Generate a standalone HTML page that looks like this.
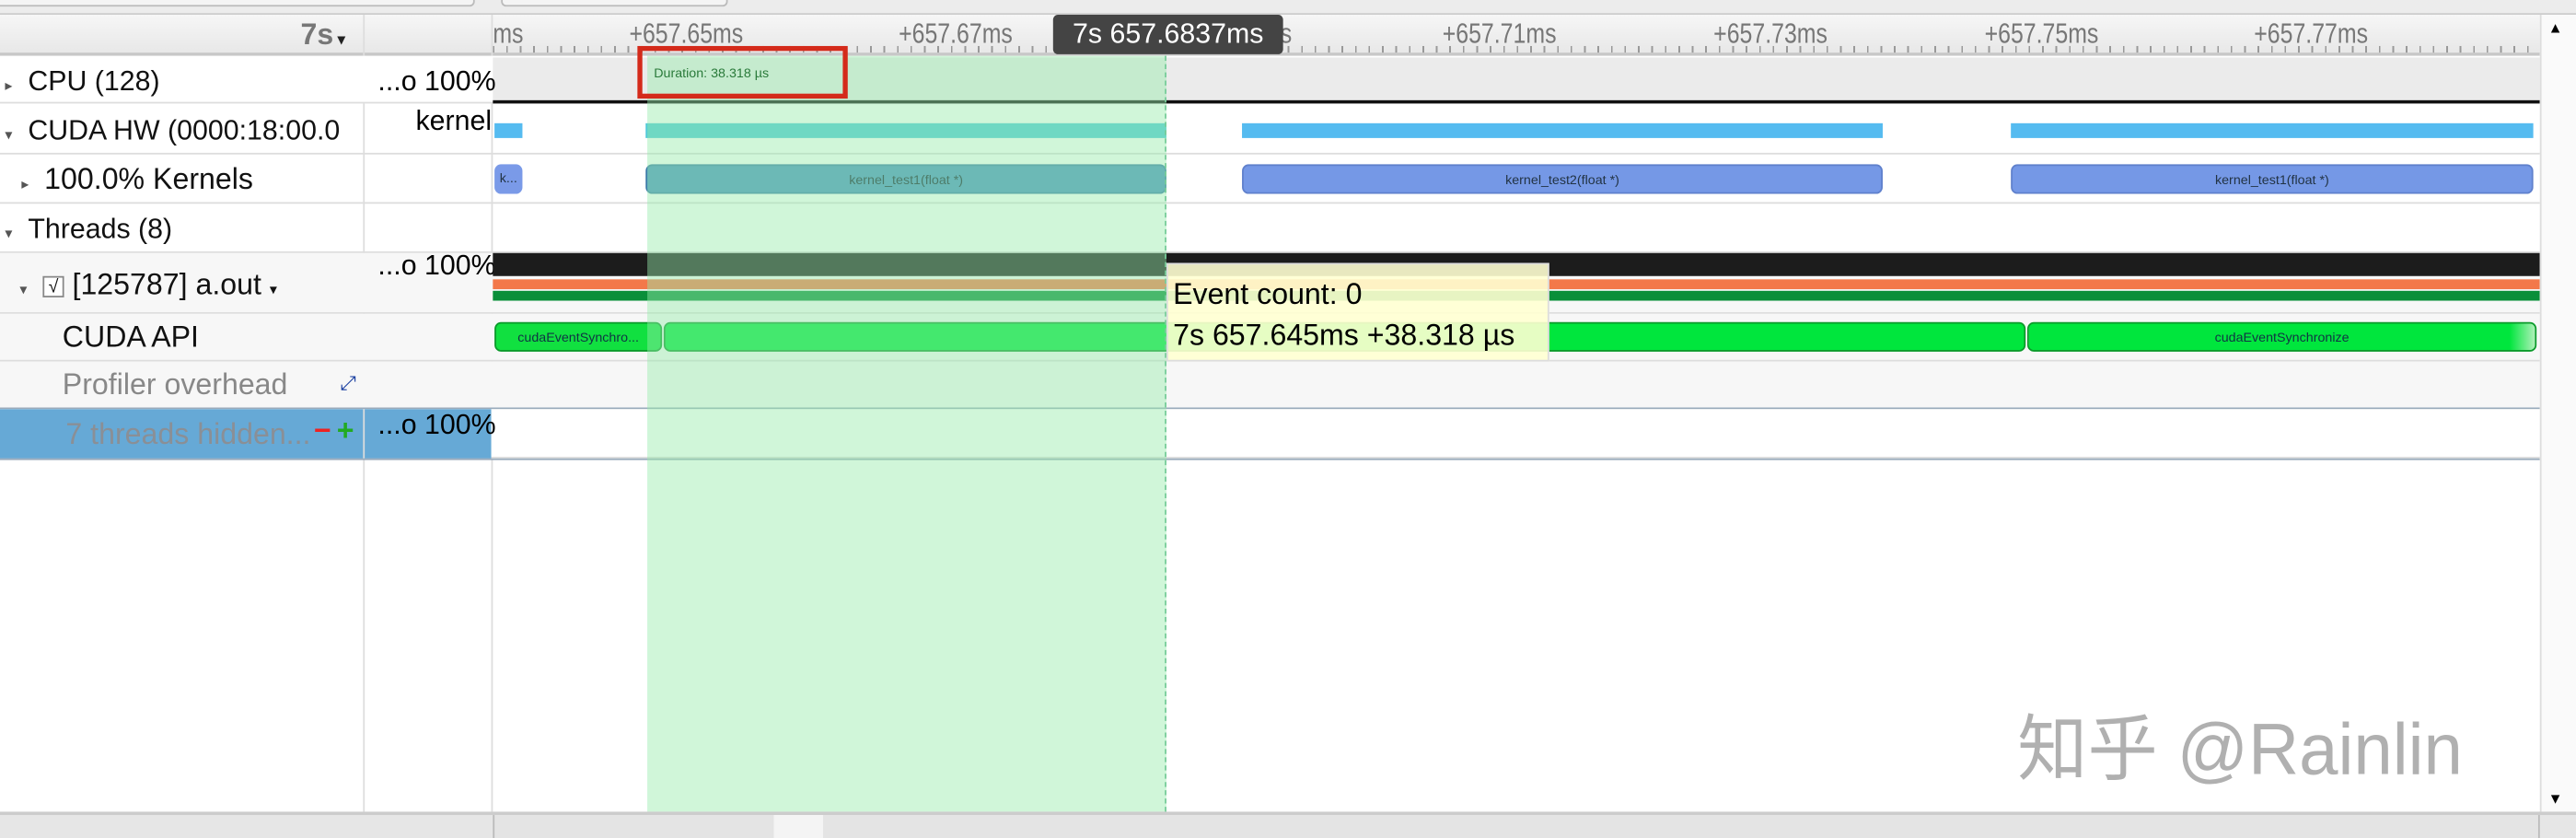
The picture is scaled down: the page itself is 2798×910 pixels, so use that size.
<!DOCTYPE html>
<html><head><meta charset="utf-8"><style>
*{margin:0;padding:0;box-sizing:border-box}
html,body{width:2798px;height:910px;overflow:hidden;background:#fff}
#w{position:absolute;left:0;top:0;width:1568px;height:510px;transform:scale(1.78444,1.78431);transform-origin:0 0;font-family:"Liberation Sans",sans-serif;background:#fff}
.a{position:absolute}
.lbl{position:absolute;left:0;width:221px;font-size:17px;color:#111;white-space:nowrap;overflow:hidden}
.tri{font-size:9px;color:#555;display:inline-block;width:14px}
.row{position:absolute;left:0;width:1546px;border-bottom:1px solid #ddd}
.tk{position:absolute;top:11px;font-size:17px;color:#777;transform:scaleX(0.82);transform-origin:0 0}
.bar{position:absolute;border-radius:4px;font-size:8px;text-align:center;color:#234;overflow:hidden;white-space:nowrap}
</style></head><body><div id="w">
<div class="a" style="left:0;top:0;width:1568px;height:9px;background:#ececec;border-bottom:1px solid #ccc"></div>
<div class="a" style="left:-5px;top:-5px;width:294px;height:9px;border:1px solid #bbb;border-radius:3px;background:#f4f4f4"></div>
<div class="a" style="left:305px;top:-5px;width:138px;height:9px;border:1px solid #bbb;border-radius:3px;background:#f4f4f4"></div>
<div class="a" style="left:0;top:9px;width:1546px;height:25px;background:linear-gradient(#f6f6f6,#e8e8e8);border-bottom:2px solid #c8c8c8"></div>
<div class="a" style="left:221px;top:9px;width:1px;height:485px;background:#ddd"></div>
<div class="a" style="left:299px;top:9px;width:1px;height:485px;background:#ddd"></div>
<div class="a" style="left:183px;top:11px;font-size:18px;color:#777;font-weight:bold">7s<span style="font-size:9px;color:#222"> ▾</span></div>
<div class="tk" style="left:300px">ms</div>
<div class="tk" style="left:383px">+657.65ms</div>
<div class="tk" style="left:547px">+657.67ms</div>
<div class="tk" style="left:760px">0ms</div>
<div class="tk" style="left:878px">+657.71ms</div>
<div class="tk" style="left:1043px">+657.73ms</div>
<div class="tk" style="left:1208px">+657.75ms</div>
<div class="tk" style="left:1372px">+657.77ms</div>
<div class="a" style="left:300px;top:28px;width:1246px;height:4px;background:repeating-linear-gradient(90deg,#999 0 1px,transparent 1px 8.2px)"></div>
<div class="row" style="top:34px;height:29px;background:#fff"></div>
<div class="a" style="left:300px;top:35px;width:1246px;height:26px;background:#ebebeb"></div>
<div class="a" style="left:300px;top:61px;width:1246px;height:2px;background:#111"></div>
<div class="row" style="top:63px;height:31px"></div>
<div class="row" style="top:94px;height:30px"></div>
<div class="row" style="top:124px;height:30px"></div>
<div class="row" style="top:154px;height:37px;background:#f7f7f7"></div>
<div class="row" style="top:191px;height:29px;background:#f7f7f7"></div>
<div class="row" style="top:220px;height:29px;background:#f7f7f7;border-bottom:1px solid #9ab"></div>
<div class="row" style="top:249px;height:30px;background:#fff"></div>
<div class="a" style="left:0;top:249px;width:299px;height:30px;background:#66a9d6"></div>
<div class="a" style="left:221px;top:249px;width:1px;height:30px;background:#ddd"></div>
<div class="a" style="left:0;top:279px;width:1546px;height:1px;background:#9ab"></div>
<div class="lbl" style="top:40px;left:3px"><span class="tri">▸</span>CPU (128)</div>
<div class="lbl" style="top:70px;left:3px;width:218px"><span class="tri">▾</span>CUDA HW (0000:18:00.0</div>
<div class="lbl" style="top:99px;left:13px;font-size:18px"><span class="tri">▸</span>100.0% Kernels</div>
<div class="lbl" style="top:130px;left:3px"><span class="tri">▾</span>Threads (8)</div>
<div class="lbl" style="top:163px;left:12px;font-size:18px"><span class="tri">▾</span><span style="display:inline-block;width:13px;height:13px;border:1px solid #888;font-size:11px;line-height:12px;text-align:center;vertical-align:1px;background:#fff">√</span> [125787] a.out <span style="font-size:9px">▾</span></div>
<div class="lbl" style="top:195px;left:38px;font-size:18px">CUDA API</div>
<div class="lbl" style="top:224px;left:38px;color:#888;font-size:18px">Profiler overhead</div>
<div class="a" style="left:207px;top:226px;font-size:12px;color:#1a3fa0">⤢</div>
<div class="lbl" style="top:254px;left:40px;color:#8a8f96;width:150px;font-size:18px">7 threads hidden...</div>
<div class="a" style="left:191px;top:252px;font-size:18px;color:#e22;font-weight:bold">−</div>
<div class="a" style="left:205px;top:252px;font-size:18px;color:#2a2;font-weight:bold">+</div>
<div class="a" style="left:230px;top:40px;font-size:17px">...o 100%</div>
<div class="a" style="left:253px;top:64px;font-size:17px">kernel</div>
<div class="a" style="left:230px;top:152px;font-size:17px">...o 100%</div>
<div class="a" style="left:230px;top:249px;font-size:17px">...o 100%</div>
<div class="a" style="left:301px;top:75px;width:17px;height:9px;background:#55bbf0"></div>
<div class="a" style="left:393px;top:75px;width:317px;height:9px;background:#4fc9d8"></div>
<div class="a" style="left:756px;top:75px;width:390px;height:9px;background:#55bbf0"></div>
<div class="a" style="left:1224px;top:75px;width:318px;height:9px;background:#55bbf0"></div>
<div class="bar" style="left:301px;top:100px;width:17px;height:18px;background:#7a9ae8;line-height:18px">k...</div>
<div class="bar" style="left:393px;top:100px;width:317px;height:18px;background:#4a90c0;line-height:18px;border:1px solid #3a7aa8;color:#123">kernel_test1(float *)</div>
<div class="bar" style="left:756px;top:100px;width:390px;height:18px;background:#7598e6;line-height:18px;border:1px solid #5f80cc">kernel_test2(float *)</div>
<div class="bar" style="left:1224px;top:100px;width:318px;height:18px;background:#7598e6;line-height:18px;border:1px solid #5f80cc">kernel_test1(float *)</div>
<div class="a" style="left:300px;top:154px;width:1246px;height:14px;background:#1c1c1c"></div>
<div class="a" style="left:300px;top:170px;width:1246px;height:6px;background:#f3784a"></div>
<div class="a" style="left:300px;top:177px;width:1246px;height:6px;background:#0a8f3a"></div>
<div class="bar" style="left:301px;top:196px;width:102px;height:18px;background:#11e040;line-height:18px;border:1px solid #0a9a2a;color:#134">cudaEventSynchro...</div>
<div class="bar" style="left:404px;top:196px;width:829px;height:18px;background:#00e63d;border:1px solid #0a9a2a"></div>
<div class="bar" style="left:1234px;top:196px;width:310px;height:18px;background:linear-gradient(90deg,#00e63d 95%,#aef0b8);line-height:18px;border:1px solid #0a9a2a;color:#134">cudaEventSynchronize</div>
<div class="a" style="left:394px;top:34px;width:316px;height:460px;background:rgba(150,235,170,0.45);border-right:1px dashed #7c9"></div>
<div class="a" style="left:388px;top:28px;width:128px;height:32px;border:3px solid #d42a1a"></div>
<div class="a" style="left:398px;top:40px;font-size:8px;color:#2a7a3a">Duration: 38.318 µs</div>
<div class="a" style="left:641px;top:9px;width:140px;height:24px;background:#444;border-radius:3px;color:#fff;font-size:17px;line-height:24px;text-align:center">7s 657.6837ms</div>
<div class="a" style="left:710px;top:160px;width:233px;height:60px;background:rgba(255,255,210,0.9);border:1px solid #ddd;font-size:18px;color:#000;padding:6px 3px;line-height:25px;white-space:nowrap">Event count: 0<br>7s 657.645ms +38.318 µs</div>
<div class="a" style="left:1228px;top:420px;font-size:44px;color:#b0b0b0;font-family:'Liberation Sans','Noto Sans CJK SC',sans-serif;transform:scaleX(0.97);transform-origin:0 0">知乎 @Rainlin</div>
<div class="a" style="left:1546px;top:9px;width:22px;height:485px;background:#fafafa;border-left:1px solid #ddd"></div>
<div class="a" style="left:1551px;top:12px;font-size:9px">▲</div>
<div class="a" style="left:1551px;top:481px;font-size:9px">▼</div>
<div class="a" style="left:0;top:494px;width:1568px;height:16px;background:#e6e6e6;border-top:2px solid #ccc"></div>
<div class="a" style="left:300px;top:496px;width:1246px;height:14px;background:#e4e4e4;border-left:1px solid #bbb;border-right:1px solid #bbb"></div>
<div class="a" style="left:471px;top:496px;width:30px;height:14px;background:#f4f4f4"></div>
</div></body></html>
